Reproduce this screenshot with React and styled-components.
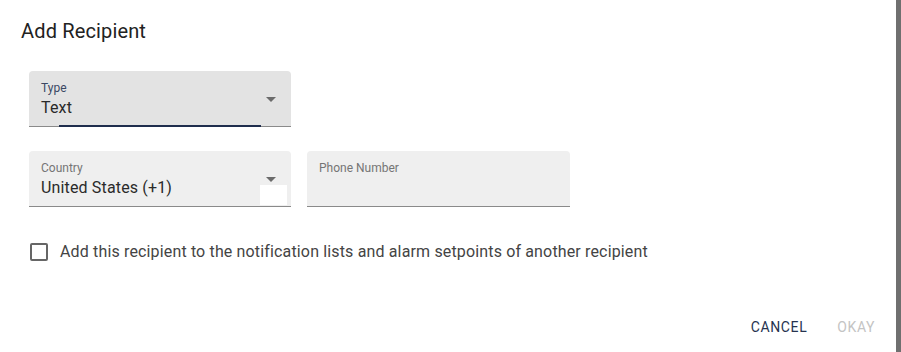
import React from 'react'
import styled, { createGlobalStyle } from 'styled-components'

const GlobalStyle = createGlobalStyle`
  html, body {
    margin: 0;
    padding: 0;
    background: #6f6f6f;
    font-family: Roboto, "Liberation Sans", Arial, sans-serif;
  }
`

const Dialog = styled.div`
  width: 896px;
  height: 352px;
  background: #fff;
  box-sizing: border-box;
  display: flex;
  flex-direction: column;
`

const Title = styled.h2`
  margin: 0;
  padding: 17px 21px 0;
  height: 54px;
  box-sizing: border-box;
  font-size: 20px;
  font-weight: 400;
  letter-spacing: 0.15px;
  line-height: 28px;
  color: #222;
`

const Content = styled.div`
  padding: 17px 29px 0;
  display: flex;
  flex-direction: column;
  gap: 24px;
`

const Row = styled.div`
  display: flex;
  gap: 16px;
`

const Field = styled.div`
  position: relative;
  width: ${p => p.width || 262}px;
  height: 56px;
  box-sizing: border-box;
  padding: 10px 12px 0;
  background: ${p => (p.focused ? '#e3e3e3' : '#efefef')};
  border-radius: 4px 4px 0 0;
  border-bottom: 1px solid #8a8a8a;
`

const Label = styled.div`
  font-size: 12px;
  line-height: 15px;
  color: ${p => (p.focused ? '#3b4863' : '#757575')};
`

const Value = styled.div`
  margin-top: 2px;
  font-size: 16px;
  letter-spacing: 0.15px;
  line-height: 20px;
  color: #2a2a2a;
`

const Arrow = styled.span`
  position: absolute;
  right: 15px;
  top: 26px;
  width: 0;
  height: 0;
  border-left: 5px solid transparent;
  border-right: 5px solid transparent;
  border-top: 5px solid #6b6b6b;
`

const FocusBar = styled.span`
  position: absolute;
  left: 30px;
  right: 30px;
  bottom: -1px;
  height: 2px;
  background: #1f2d4d;
`

const Patch = styled.span`
  position: absolute;
  left: 231px;
  top: 34px;
  width: 27px;
  height: 20px;
  background: #fff;
`

const CheckRow = styled.label`
  display: flex;
  align-items: center;
  gap: 12px;
  margin-top: 11px;
  padding-left: 1px;
  font-size: 16px;
  letter-spacing: 0.15px;
  color: #444;
`

const Box = styled.span`
  width: 14px;
  height: 14px;
  border: 2px solid #666;
  border-radius: 2px;
  flex: none;
`

const Actions = styled.div`
  margin-top: auto;
  display: flex;
  justify-content: flex-end;
  gap: 14px;
  padding: 0 13px 9px;
`

const Button = styled.button`
  background: none;
  border: none;
  padding: 8px 8px;
  font-family: inherit;
  font-size: 14px;
  font-weight: 400;
  letter-spacing: 0.6px;
  text-transform: uppercase;
  color: ${p => (p.disabled ? '#c4c4c4' : '#26334f')};
`

export default function App() {
  return (
    <>
      <GlobalStyle />
      <Dialog>
        <Title>Add Recipient</Title>
        <Content>
          <Row>
            <Field focused>
              <Label focused>Type</Label>
              <Value>Text</Value>
              <Arrow />
              <FocusBar />
            </Field>
          </Row>
          <Row>
            <Field>
              <Label>Country</Label>
              <Value>United States (+1)</Value>
              <Arrow />
              <Patch />
            </Field>
            <Field width={263}>
              <Label>Phone Number</Label>
            </Field>
          </Row>
          <CheckRow>
            <Box />
            Add this recipient to the notification lists and alarm setpoints of another recipient
          </CheckRow>
        </Content>
        <Actions>
          <Button>Cancel</Button>
          <Button disabled>Okay</Button>
        </Actions>
      </Dialog>
    </>
  )
}
